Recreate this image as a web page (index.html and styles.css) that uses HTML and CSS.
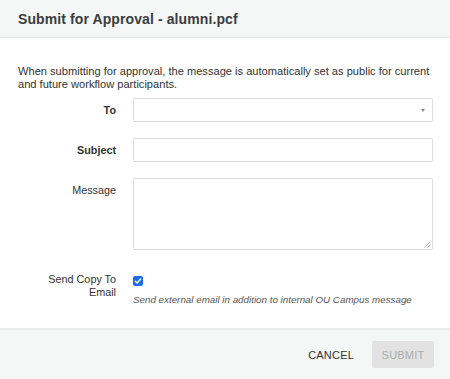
FILE: index.html
```html
<!DOCTYPE html>
<html>
<head>
<meta charset="utf-8">
<link rel="stylesheet" href="styles.css">
</head>
<body>
<div class="dialog">
  <div class="header">
    <h1 class="title">Submit for Approval - alumni.pcf</h1>
  </div>
  <div class="content">
    <p class="intro">When submitting for approval, the message is automatically set as public for current and future workflow participants.</p>
    <div class="form">
      <div class="row">
        <label class="label bold">To</label>
        <div class="field">
          <div class="select"><span class="caret"></span></div>
        </div>
      </div>
      <div class="row">
        <label class="label bold">Subject</label>
        <div class="field"><div class="input"></div></div>
      </div>
      <div class="row">
        <label class="label">Message</label>
        <div class="field">
          <div class="textarea">
            <svg class="grip" width="7" height="7" viewBox="0 0 7 7"><path d="M6.5 0.5 L0.5 6.5 M6.5 3.5 L3.5 6.5" stroke="#9a9a9a" stroke-width="0.8" fill="none"/></svg>
          </div>
        </div>
      </div>
      <div class="row row-check">
        <label class="label">Send Copy To<br>Email</label>
        <div class="field">
          <span class="checkbox">
            <svg width="10" height="10" viewBox="0 0 10 10"><path d="M2.4 5.2 L4.2 7 L7.6 3" stroke="#fff" stroke-width="1.5" fill="none" stroke-linecap="round" stroke-linejoin="round"/></svg>
          </span>
          <p class="help">Send external email in addition to internal OU Campus message</p>
        </div>
      </div>
    </div>
  </div>
  <div class="footer">
    <button class="btn btn-cancel">CANCEL</button>
    <button class="btn btn-submit">SUBMIT</button>
  </div>
</div>
</body>
</html>
```
FILE: styles.css
```css
* { box-sizing: border-box; }
html, body { margin: 0; padding: 0; background: #fff; }
body { font-family: "Liberation Sans", Arial, sans-serif; color: #333; }
.dialog { width: 450px; height: 379px; display: flex; flex-direction: column; }
.header { height: 38px; background: #f5f6f6; border-bottom: 1px solid #e6e7e7; display: flex; align-items: center; padding-left: 18px; }
.title { margin: 0; font-size: 14px; font-weight: bold; color: #3a3d40; letter-spacing: 0.1px; }
.content { flex: 1; padding: 27px 17px 0 18px; }
.intro { margin: 0 0 7px; font-size: 11.1px; line-height: 13px; color: #333; }
.form { display: flex; flex-direction: column; gap: 16px; }
.row { display: grid; grid-template-columns: 98px 300px; column-gap: 17px; align-items: start; }
.label { text-align: right; font-size: 10.8px; line-height: 14px; padding-top: 5px; color: #333; }
.bold { font-weight: bold; }
.field { position: relative; }
.select, .input { height: 24px; border: 1px solid #dcdcdc; border-radius: 2px; background: #fff; position: relative; }
.caret { position: absolute; right: 7px; top: 10px; width: 0; height: 0; border-left: 2.5px solid transparent; border-right: 2.5px solid transparent; border-top: 3.5px solid #888; }
.textarea { height: 72px; border: 1px solid #dcdcdc; border-radius: 2px; position: relative; }
.grip { position: absolute; right: 1px; bottom: 1px; }
.row-check { margin-top: 7px; }
.row-check .label { padding-top: 0; line-height: 13px; }
.checkbox { display: block; width: 10px; height: 10px; margin-top: 3px; background: #1a6ef0; border-radius: 2px; }
.checkbox svg { display: block; }
.help { margin: 8px 0 0; font-size: 9.8px; font-style: italic; color: #555; }
.footer { height: 51px; background: #f5f6f6; border-top: 2px solid #ebecec; display: flex; justify-content: flex-end; align-items: center; padding-right: 16px; gap: 18px; }
.btn { font-family: "Liberation Sans", Arial, sans-serif; font-size: 11px; border: none; background: none; padding: 0; letter-spacing: 0.2px; }
.btn-cancel { color: #333; }
.btn-submit { width: 62px; height: 27px; background: #e2e2e2; color: #acacac; border-radius: 2px; }
```
